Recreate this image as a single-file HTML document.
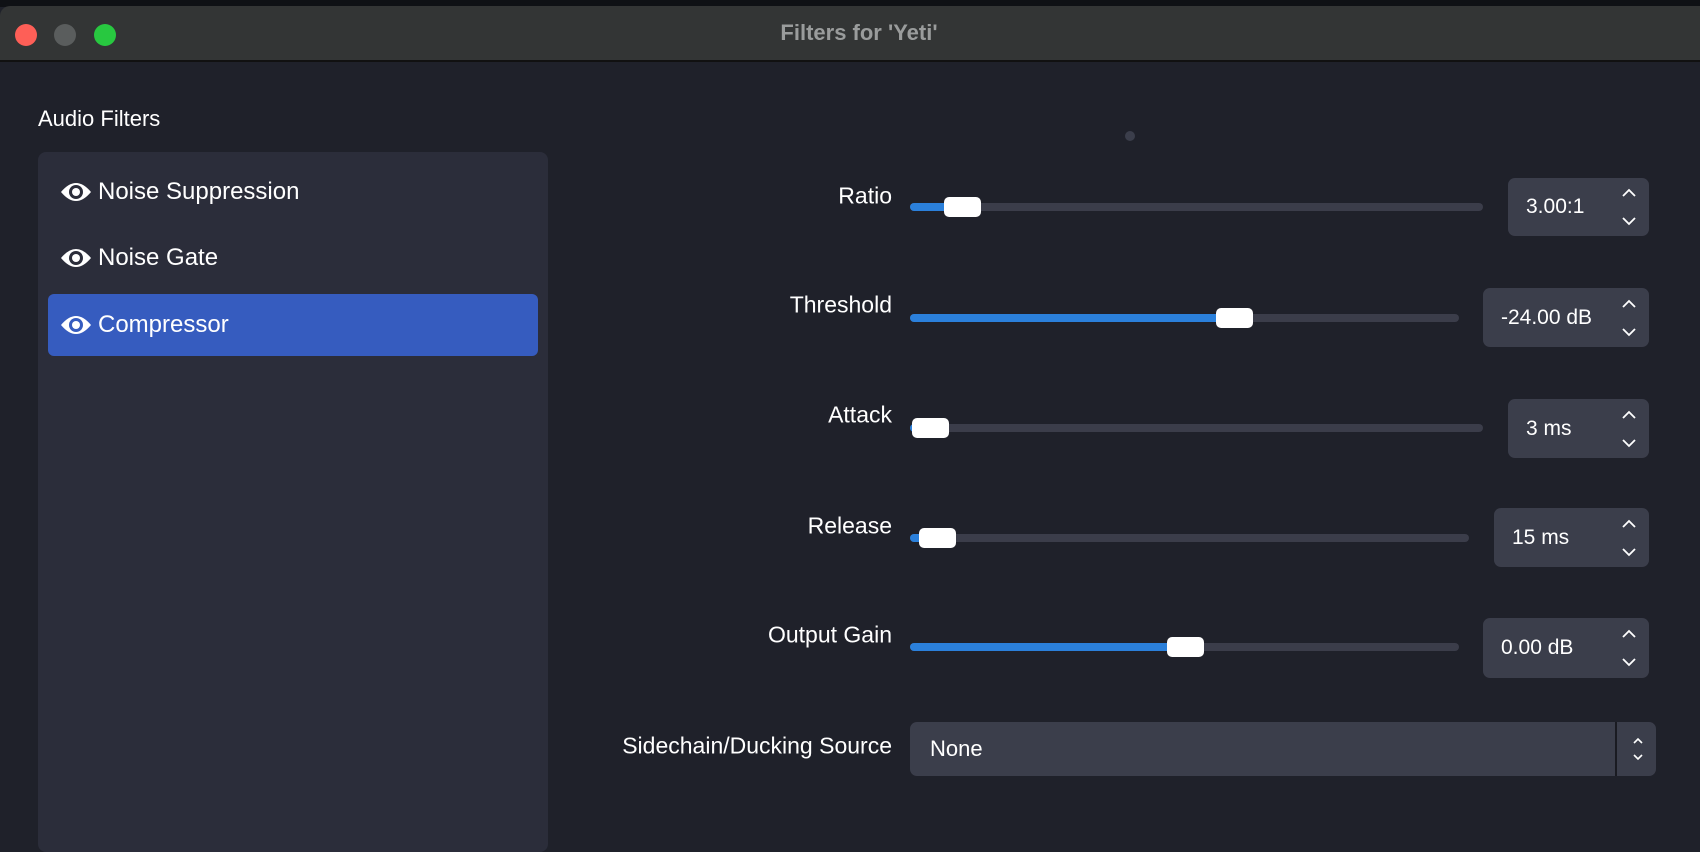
<!DOCTYPE html>
<html><head><meta charset="utf-8"><style>
*{margin:0;padding:0;box-sizing:border-box}
body{width:1700px;height:826px;background:#1f212a;overflow:hidden;position:relative;font-family:"Liberation Sans",sans-serif;color:#fff}
.abs{position:absolute}
.strip{left:0;top:0;width:1700px;height:7px;background:#0f1115}
.title{left:0;top:6px;width:1700px;height:56px;background:#333535;border-radius:10px 0 0 0;border-bottom:2px solid #111}
.tl{width:22px;height:22px;border-radius:50%;top:24px}
.ttext{left:0;width:1718px;top:20px;text-align:center;font-weight:bold;font-size:22px;color:#9a9c9c}
.panel{left:38px;top:152px;width:510px;height:700px;background:#2b2d3a;border-radius:8px}
.item{left:48px;width:490px;height:62px;font-size:24px;display:flex;align-items:center;padding-left:12px;border-radius:6px}
.item svg{margin-right:6px}
.lbl{right:808px;font-size:23px;text-align:right;white-space:nowrap;transform:translateY(-50%)}
.track{height:8px;border-radius:4px;background:#3b3d4a}
.fill{height:8px;border-radius:4px;background:#2b80db}
.handle{width:37px;height:20px;border-radius:5px;background:#fff}
.spin{background:#3b3e4b;border-radius:7px;font-size:21px;display:flex;align-items:center;padding-left:18px}
.arr{position:absolute;right:12px;top:50%;transform:translateY(-50%)}
</style></head><body>
<div class="abs strip"></div>
<div class="abs title"></div>
<div class="abs tl" style="left:15px;background:#fe5f57"></div>
<div class="abs tl" style="left:54px;background:#5a5d5d"></div>
<div class="abs tl" style="left:94px;background:#28c840"></div>
<div class="abs ttext">Filters for 'Yeti'</div>

<div class="abs" style="left:38px;top:106px;font-size:22px">Audio Filters</div>
<div class="abs panel"></div>
<div class="abs" style="left:1125px;top:131px;width:10px;height:10px;border-radius:50%;background:#3b3e4b"></div>

<div class="abs item" style="top:161px"><svg width="32" height="26" viewBox="0 0 32 26"><path d="M1 13 Q16 -5 31 13 Q16 31 1 13Z" fill="#fff"/><circle cx="16" cy="13" r="7" fill="#2b2d3a"/><circle cx="16" cy="13" r="4" fill="#fff"/></svg>Noise Suppression</div>
<div class="abs item" style="top:227px"><svg width="32" height="26" viewBox="0 0 32 26"><path d="M1 13 Q16 -5 31 13 Q16 31 1 13Z" fill="#fff"/><circle cx="16" cy="13" r="7" fill="#2b2d3a"/><circle cx="16" cy="13" r="4" fill="#fff"/></svg>Noise Gate</div>
<div class="abs item" style="top:294px;background:#365cbf"><svg width="32" height="26" viewBox="0 0 32 26"><path d="M1 13 Q16 -5 31 13 Q16 31 1 13Z" fill="#fff"/><circle cx="16" cy="13" r="7" fill="#365cbf"/><circle cx="16" cy="13" r="4" fill="#fff"/></svg>Compressor</div>

<div class="abs lbl" style="top:196px">Ratio</div>
<div class="abs track" style="left:910px;top:203px;width:573px"></div>
<div class="abs fill" style="left:910px;top:203px;width:50px"></div>
<div class="abs handle" style="left:944px;top:197px"></div>
<div class="abs spin" style="left:1508px;top:178px;width:141px;height:58px">3.00:1<svg class="arr" width="16" height="40" viewBox="0 0 16 40"><path d="M2 9 8 3 14 9M2 31 8 37 14 31" fill="none" stroke="#fff" stroke-width="1.8"/></svg></div>

<div class="abs lbl" style="top:305px">Threshold</div>
<div class="abs track" style="left:910px;top:314px;width:549px"></div>
<div class="abs fill" style="left:910px;top:314px;width:320px"></div>
<div class="abs handle" style="left:1216px;top:308px"></div>
<div class="abs spin" style="left:1483px;top:288px;width:166px;height:59px;padding-left:18px">-24.00 dB<svg class="arr" width="16" height="40" viewBox="0 0 16 40"><path d="M2 9 8 3 14 9M2 31 8 37 14 31" fill="none" stroke="#fff" stroke-width="1.8"/></svg></div>

<div class="abs lbl" style="top:415px">Attack</div>
<div class="abs track" style="left:910px;top:424px;width:573px"></div>
<div class="abs fill" style="left:910px;top:424px;width:14px"></div>
<div class="abs handle" style="left:912px;top:418px"></div>
<div class="abs spin" style="left:1508px;top:399px;width:141px;height:59px">3 ms<svg class="arr" width="16" height="40" viewBox="0 0 16 40"><path d="M2 9 8 3 14 9M2 31 8 37 14 31" fill="none" stroke="#fff" stroke-width="1.8"/></svg></div>

<div class="abs lbl" style="top:526px">Release</div>
<div class="abs track" style="left:910px;top:534px;width:559px"></div>
<div class="abs fill" style="left:910px;top:534px;width:22px"></div>
<div class="abs handle" style="left:919px;top:528px"></div>
<div class="abs spin" style="left:1494px;top:508px;width:155px;height:59px">15 ms<svg class="arr" width="16" height="40" viewBox="0 0 16 40"><path d="M2 9 8 3 14 9M2 31 8 37 14 31" fill="none" stroke="#fff" stroke-width="1.8"/></svg></div>

<div class="abs lbl" style="top:635px">Output Gain</div>
<div class="abs track" style="left:910px;top:643px;width:549px"></div>
<div class="abs fill" style="left:910px;top:643px;width:270px"></div>
<div class="abs handle" style="left:1167px;top:637px"></div>
<div class="abs spin" style="left:1483px;top:618px;width:166px;height:60px">0.00 dB<svg class="arr" width="16" height="40" viewBox="0 0 16 40"><path d="M2 9 8 3 14 9M2 31 8 37 14 31" fill="none" stroke="#fff" stroke-width="1.8"/></svg></div>

<div class="abs lbl" style="top:746px">Sidechain/Ducking Source</div>
<div class="abs spin" style="left:910px;top:722px;width:746px;height:54px;padding-left:20px;font-size:22px">None
<div class="abs" style="left:705px;top:0;width:2px;height:54px;background:#1a1b22"></div>
<svg class="arr" style="right:11px" width="14" height="30" viewBox="0 0 14 30"><path d="M3 9 7 5 11 9M3 21 7 25 11 21" fill="none" stroke="#fff" stroke-width="1.6"/></svg></div>
</body></html>
